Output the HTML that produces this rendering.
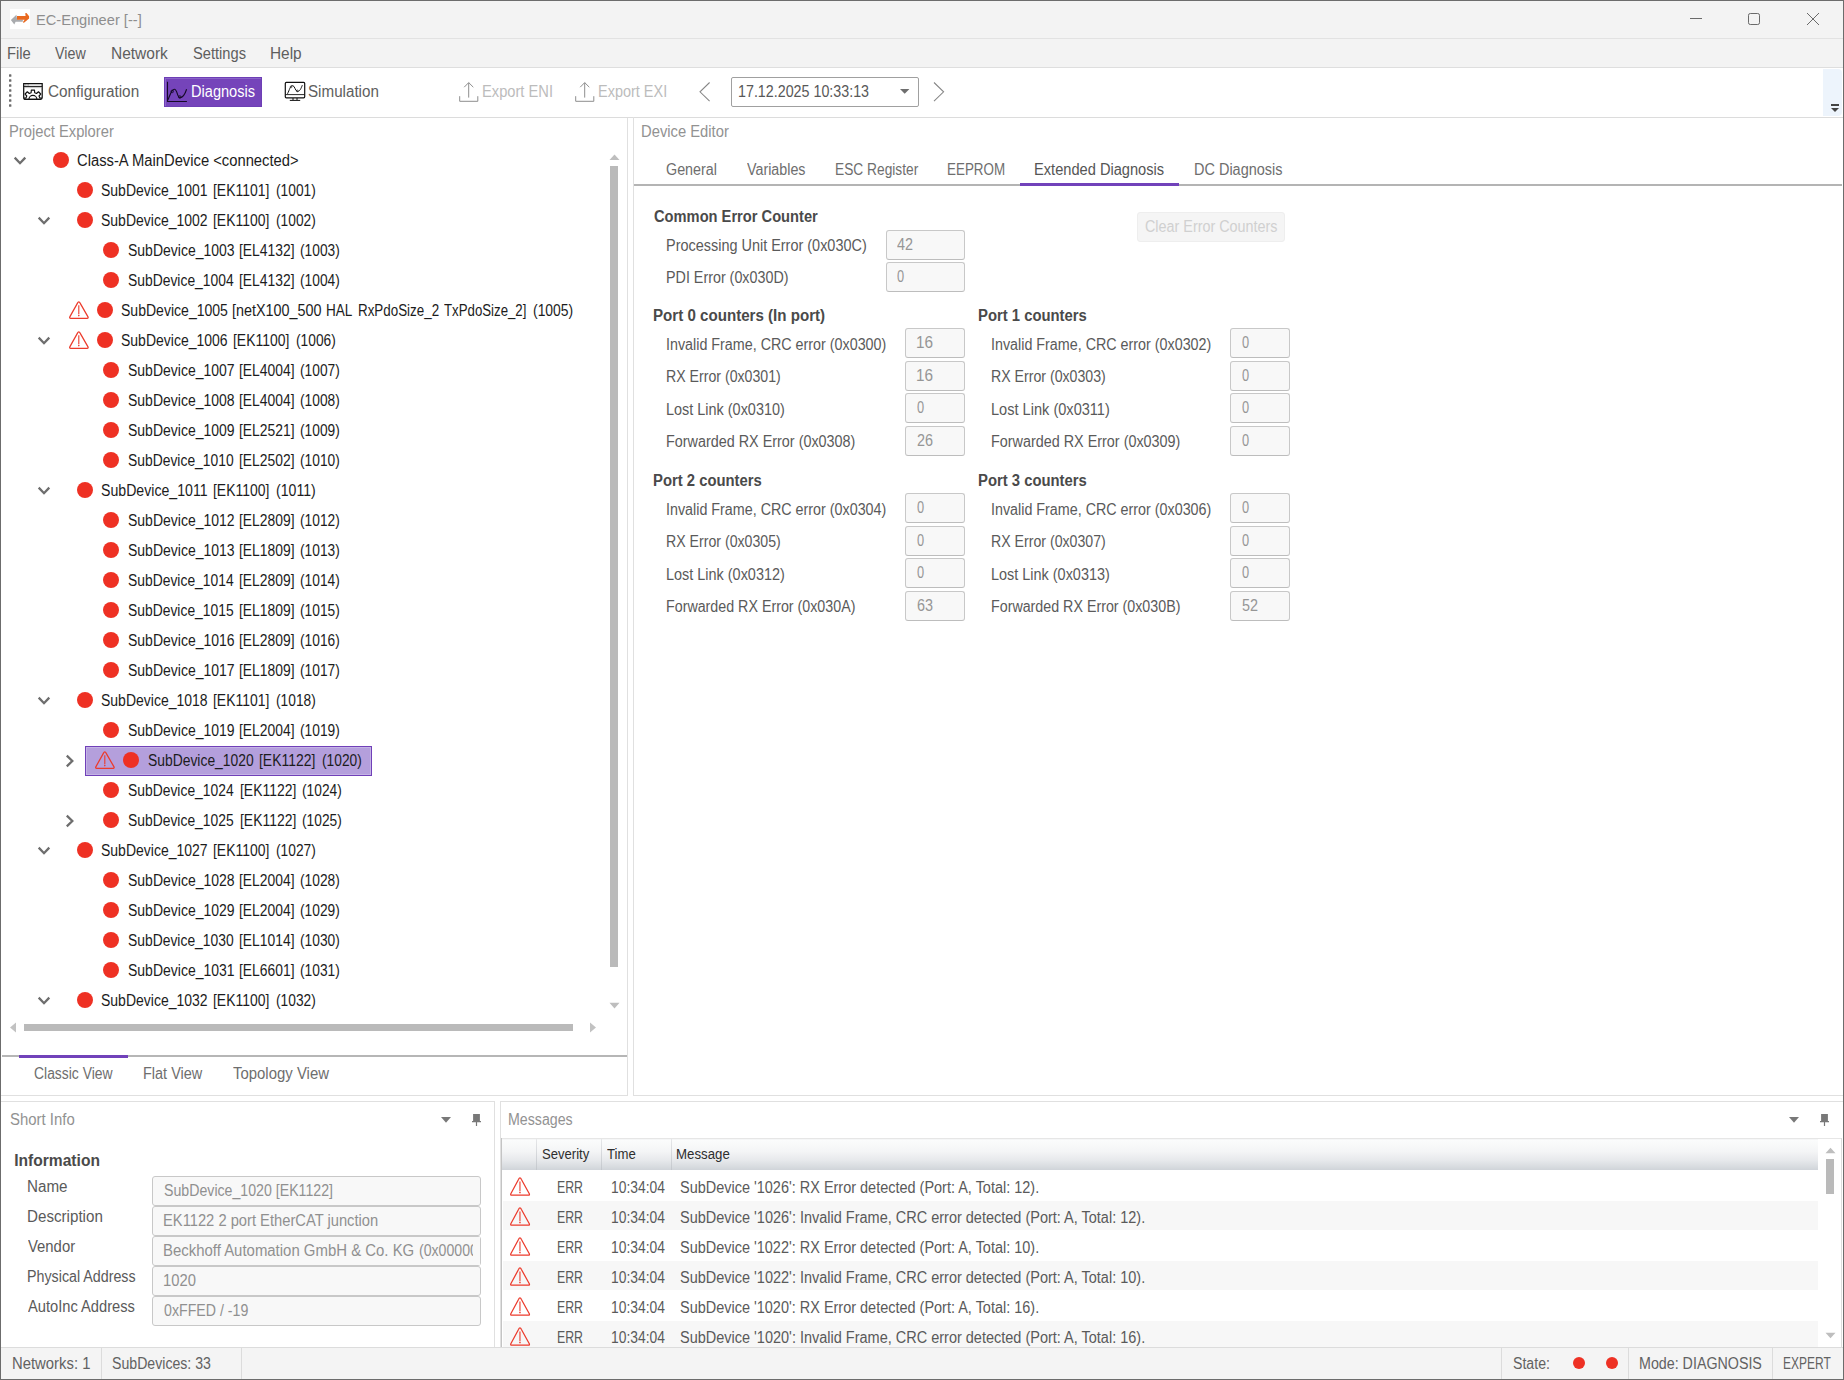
<!DOCTYPE html>
<html><head><meta charset="utf-8"><title>EC-Engineer</title>
<style>
html,body{margin:0;padding:0;}
body{width:1844px;height:1380px;position:relative;overflow:hidden;background:#fff;font-family:"Liberation Sans", sans-serif;}
.a{position:absolute;}
.t{position:absolute;white-space:pre;line-height:21px;transform-origin:0 50%;}
</style></head>
<body>
<div class="a" style="left:0px;top:0px;width:1844px;height:1380px;background:#fff;"></div>
<div class="a" style="left:0px;top:0px;width:1844px;height:39px;background:#f3f3f3;"></div>
<div class="a" style="left:0px;top:38px;width:1844px;height:1px;background:#e2e2e2;"></div>
<div class="a" style="left:0px;top:39px;width:1844px;height:28px;background:#f3f3f3;"></div>
<div class="a" style="left:0px;top:67px;width:1844px;height:1px;background:#dedede;"></div>
<div class="a" style="left:0px;top:117px;width:1844px;height:1px;background:#dcdcdc;"></div>
<div class="a" style="left:10px;top:9px;width:20px;height:20px;background:#fff;"></div>
<svg class="a" style="left:10px;top:9px" width="20" height="20" viewBox="0 0 20 20"><path d="M0.9 10.9 L6.4 5.7 L7.1 10.4 L12.8 10.6 L12.8 12.8 L5.6 12.8 L4.3 15.4 Z" fill="#a9abae"/><path d="M7 6.9 L15.6 6.9 L15.2 4.3 L16.5 3.9 L19.1 7.2 L19.1 9.6 L13.7 14 L13 13.1 L14.6 10.8 L7 10.8 Z" fill="#e9691f"/></svg>
<svg class="a" style="left:1686px;top:8px" width="20" height="20" viewBox="0 0 20 20"><path d="M4 10.5 H16" stroke="#6a6a6a" stroke-width="1" fill="none"/></svg>
<svg class="a" style="left:1744px;top:9px" width="20" height="20" viewBox="0 0 20 20"><rect x="4.5" y="4.5" width="11" height="11" rx="1.8" stroke="#6a6a6a" stroke-width="1" fill="none"/></svg>
<svg class="a" style="left:1803px;top:9px" width="20" height="20" viewBox="0 0 20 20"><path d="M4 4 L16 16 M16 4 L4 16" stroke="#6a6a6a" stroke-width="1" fill="none"/></svg>
<svg class="a" style="left:8px;top:73px" width="5" height="36" viewBox="0 0 5 36"><rect x="1" y="1.2" width="2.4" height="2.5" rx="0.5" fill="#6e6e6e"/><rect x="1" y="6.2" width="2.4" height="2.5" rx="0.5" fill="#6e6e6e"/><rect x="1" y="11.2" width="2.4" height="2.5" rx="0.5" fill="#6e6e6e"/><rect x="1" y="16.2" width="2.4" height="2.5" rx="0.5" fill="#6e6e6e"/><rect x="1" y="21.2" width="2.4" height="2.5" rx="0.5" fill="#6e6e6e"/><rect x="1" y="26.2" width="2.4" height="2.5" rx="0.5" fill="#6e6e6e"/><rect x="1" y="31.2" width="2.4" height="2.5" rx="0.5" fill="#6e6e6e"/></svg>
<svg class="a" style="left:22px;top:82px" width="22" height="19" viewBox="0 0 22 19"><defs><clipPath id="cfgc"><rect x="1.8" y="4.8" width="18.3" height="12.4"/></clipPath></defs><path d="M12.68 10.73 L12.48 8.13 L9.32 8.13 L9.12 10.73 L7.30 11.48 L5.33 9.78 L3.08 12.03 L4.78 14.00 L4.03 15.82 L1.43 16.02 L1.43 17.20 L4.03 17.20 L4.78 17.20 L3.08 17.20 L5.33 17.20 L7.30 17.20 L9.12 17.20 L9.32 17.20 L12.48 17.20 L12.68 17.20 L14.50 17.20 L16.47 17.20 L18.72 17.20 L17.02 17.20 L17.77 17.20 L20.37 17.20 L20.37 16.02 L17.77 15.82 L17.02 14.00 L18.72 12.03 L16.47 9.78 L14.50 11.48 Z" fill="none" stroke="#111" stroke-width="1.15" stroke-linejoin="round" clip-path="url(#cfgc)"/><path d="M6.9 17.4 A4 4 0 0 1 14.9 17.4" fill="none" stroke="#111" stroke-width="1.15" clip-path="url(#cfgc)"/><path d="M1.7 1.5 H20.2 V15.6 Q20.2 17.4 18.4 17.4 H3.5 Q1.7 17.4 1.7 15.6 Z" fill="none" stroke="#111" stroke-width="1.25"/><path d="M1.7 4.4 H20.2" stroke="#111" stroke-width="1"/><path d="M1.9 5.6 H20" stroke="#888" stroke-width="0.5"/><path d="M3.2 2.9 H7.2" stroke="#555" stroke-width="0.8" stroke-dasharray="0.9 0.6"/></svg>
<div class="a" style="left:164px;top:77px;width:98px;height:30px;background:#7544ba;border:1px solid #6d3fb5;box-sizing:border-box;box-shadow:inset 1px 1px 0 0 #8a63c9;"></div>
<svg class="a" style="left:166px;top:81px" width="22" height="22" viewBox="0 0 22 22"><path d="M1.5 0.8 V20.5 H20.9" stroke="#160a28" stroke-width="1.1" fill="none"/><path d="M1.8 19 C4 14.5 5.4 8.3 8.4 8.3 C11.4 8.3 11 16.6 14 16.6 C17 16.6 19.2 12.5 20.6 8.2" stroke="#160a28" stroke-width="1.15" fill="none"/><circle cx="6.2" cy="10.4" r="1.3" fill="none" stroke="#160a28" stroke-width="0.8"/><circle cx="13.8" cy="16" r="1.3" fill="none" stroke="#160a28" stroke-width="0.8"/></svg>
<svg class="a" style="left:284px;top:81px" width="22" height="21" viewBox="0 0 22 21"><rect x="1.3" y="1.4" width="19.4" height="15.4" rx="1" fill="#fff" stroke="#111" stroke-width="1.2"/><path d="M1.5 13.6 H20.5" stroke="#111" stroke-width="0.9"/><path d="M9 17 V19 M13 17 V19 M5.8 19.4 H16.2" stroke="#111" stroke-width="1"/><path d="M3.5 12.8 C5.5 9 6.2 4.6 8.6 4.6 C11 4.6 11 10.4 13.6 10.4 C16 10.4 17.2 7 18.3 4.2" stroke="#111" stroke-width="1" fill="none"/><circle cx="7.2" cy="5.8" r="0.9" fill="none" stroke="#111" stroke-width="0.6"/><circle cx="13.3" cy="9.9" r="0.9" fill="none" stroke="#111" stroke-width="0.6"/></svg>
<svg class="a" style="left:459px;top:81px" width="20" height="22" viewBox="0 0 20 22"><path d="M0.7 15.2 V20.3 H18.8 V15.2" stroke="#8e8e8e" stroke-width="1" fill="none"/><path d="M9.7 16.6 V1.7 M5.2 6.2 L9.7 1.6 L14.3 6.2" stroke="#8e8e8e" stroke-width="1" fill="none"/></svg>
<svg class="a" style="left:575px;top:81px" width="20" height="22" viewBox="0 0 20 22"><path d="M0.7 15.2 V20.3 H18.8 V15.2" stroke="#8e8e8e" stroke-width="1" fill="none"/><path d="M9.7 16.6 V1.7 M5.2 6.2 L9.7 1.6 L14.3 6.2" stroke="#8e8e8e" stroke-width="1" fill="none"/></svg>
<svg class="a" style="left:697px;top:81px" width="16" height="22" viewBox="0 0 16 22"><path d="M12.6 1.5 L3 10.8 L12.6 20.2" stroke="#868686" stroke-width="1.05" fill="none"/></svg>
<div class="a" style="left:731px;top:77px;width:188px;height:30px;background:#fff;border:1px solid #a0a0a0;box-sizing:border-box;border-radius:2px;"></div>
<svg class="a" style="left:899px;top:88px" width="12" height="7" viewBox="0 0 12 7"><path d="M1 1 H10.4 L5.7 5.8 Z" fill="#6e6e6e"/></svg>
<svg class="a" style="left:931px;top:81px" width="16" height="22" viewBox="0 0 16 22"><path d="M3 1.5 L12.6 10.8 L3 20.2" stroke="#868686" stroke-width="1.05" fill="none"/></svg>
<div class="a" style="left:1823px;top:69px;width:19px;height:47px;background:#edf4fc;border-radius:0 4px 4px 0;"></div>
<div class="a" style="left:1831px;top:104px;width:8px;height:2px;background:#444;"></div>
<svg class="a" style="left:1830px;top:107px" width="10" height="6" viewBox="0 0 10 6"><path d="M1 1 H9 L5 5 Z" fill="#444"/></svg>
<div class="a" style="left:627px;top:118px;width:1px;height:978px;background:#e0e0e0;"></div>
<div class="a" style="left:0px;top:1095px;width:628px;height:1px;background:#e0e0e0;"></div>
<div class="a" style="left:633px;top:117px;width:1px;height:979px;background:#e0e0e0;"></div>
<div class="a" style="left:633px;top:1095px;width:1211px;height:1px;background:#e0e0e0;"></div>
<div class="a" style="left:0px;top:1101px;width:495px;height:1px;background:#e0e0e0;"></div>
<div class="a" style="left:494px;top:1101px;width:1px;height:247px;background:#e0e0e0;"></div>
<div class="a" style="left:500px;top:1101px;width:1344px;height:1px;background:#e0e0e0;"></div>
<div class="a" style="left:500px;top:1101px;width:1px;height:247px;background:#e0e0e0;"></div>
<svg class="a" style="left:12px;top:154px" width="16" height="12" viewBox="-8 -6 16 12"><path d="M-5.3 -2.4 L0 3.2 L5.3 -2.4" stroke="#6e6e6e" stroke-width="2.3" fill="none"/></svg>
<div class="a" style="left:52.8px;top:151.5px;width:16.4px;height:16.4px;border-radius:50%;background:#ee3124"></div>
<div class="a" style="left:76.8px;top:181.5px;width:16.4px;height:16.4px;border-radius:50%;background:#ee3124"></div>
<svg class="a" style="left:35.8px;top:214px" width="16" height="12" viewBox="-8 -6 16 12"><path d="M-5.3 -2.4 L0 3.2 L5.3 -2.4" stroke="#6e6e6e" stroke-width="2.3" fill="none"/></svg>
<div class="a" style="left:76.8px;top:211.5px;width:16.4px;height:16.4px;border-radius:50%;background:#ee3124"></div>
<div class="a" style="left:102.8px;top:241.5px;width:16.4px;height:16.4px;border-radius:50%;background:#ee3124"></div>
<div class="a" style="left:102.8px;top:271.5px;width:16.4px;height:16.4px;border-radius:50%;background:#ee3124"></div>
<svg class="a" style="left:67.9px;top:299.9px" width="22.0" height="20.0" viewBox="-1 -1 22 20" preserveAspectRatio="none"><path d="M8.5 2.1 Q9 0.75 9.8 0.75 Q10.6 0.75 11.1 2.1 L19 15.9 Q19.6 17.3 18.1 17.3 L1.7 17.3 Q0.2 17.3 0.8 15.9 Z" fill="none" stroke="#ec3b2c" stroke-width="1.25" stroke-linejoin="round"/><path d="M9.8 4.3 V13.2" stroke="#ec3b2c" stroke-width="1.1"/><circle cx="9.8" cy="14.6" r="0.8" fill="#ec3b2c"/></svg>
<div class="a" style="left:96.6px;top:301.5px;width:16.4px;height:16.4px;border-radius:50%;background:#ee3124"></div>
<svg class="a" style="left:35.8px;top:334px" width="16" height="12" viewBox="-8 -6 16 12"><path d="M-5.3 -2.4 L0 3.2 L5.3 -2.4" stroke="#6e6e6e" stroke-width="2.3" fill="none"/></svg>
<svg class="a" style="left:67.9px;top:329.9px" width="22.0" height="20.0" viewBox="-1 -1 22 20" preserveAspectRatio="none"><path d="M8.5 2.1 Q9 0.75 9.8 0.75 Q10.6 0.75 11.1 2.1 L19 15.9 Q19.6 17.3 18.1 17.3 L1.7 17.3 Q0.2 17.3 0.8 15.9 Z" fill="none" stroke="#ec3b2c" stroke-width="1.25" stroke-linejoin="round"/><path d="M9.8 4.3 V13.2" stroke="#ec3b2c" stroke-width="1.1"/><circle cx="9.8" cy="14.6" r="0.8" fill="#ec3b2c"/></svg>
<div class="a" style="left:96.6px;top:331.5px;width:16.4px;height:16.4px;border-radius:50%;background:#ee3124"></div>
<div class="a" style="left:102.8px;top:361.5px;width:16.4px;height:16.4px;border-radius:50%;background:#ee3124"></div>
<div class="a" style="left:102.8px;top:391.5px;width:16.4px;height:16.4px;border-radius:50%;background:#ee3124"></div>
<div class="a" style="left:102.8px;top:421.5px;width:16.4px;height:16.4px;border-radius:50%;background:#ee3124"></div>
<div class="a" style="left:102.8px;top:451.5px;width:16.4px;height:16.4px;border-radius:50%;background:#ee3124"></div>
<svg class="a" style="left:35.8px;top:484px" width="16" height="12" viewBox="-8 -6 16 12"><path d="M-5.3 -2.4 L0 3.2 L5.3 -2.4" stroke="#6e6e6e" stroke-width="2.3" fill="none"/></svg>
<div class="a" style="left:76.8px;top:481.5px;width:16.4px;height:16.4px;border-radius:50%;background:#ee3124"></div>
<div class="a" style="left:102.8px;top:511.50000000000006px;width:16.4px;height:16.4px;border-radius:50%;background:#ee3124"></div>
<div class="a" style="left:102.8px;top:541.5px;width:16.4px;height:16.4px;border-radius:50%;background:#ee3124"></div>
<div class="a" style="left:102.8px;top:571.5px;width:16.4px;height:16.4px;border-radius:50%;background:#ee3124"></div>
<div class="a" style="left:102.8px;top:601.5px;width:16.4px;height:16.4px;border-radius:50%;background:#ee3124"></div>
<div class="a" style="left:102.8px;top:631.5px;width:16.4px;height:16.4px;border-radius:50%;background:#ee3124"></div>
<div class="a" style="left:102.8px;top:661.5px;width:16.4px;height:16.4px;border-radius:50%;background:#ee3124"></div>
<svg class="a" style="left:35.8px;top:694px" width="16" height="12" viewBox="-8 -6 16 12"><path d="M-5.3 -2.4 L0 3.2 L5.3 -2.4" stroke="#6e6e6e" stroke-width="2.3" fill="none"/></svg>
<div class="a" style="left:76.8px;top:691.5px;width:16.4px;height:16.4px;border-radius:50%;background:#ee3124"></div>
<div class="a" style="left:102.8px;top:721.5px;width:16.4px;height:16.4px;border-radius:50%;background:#ee3124"></div>
<div class="a" style="left:85px;top:746px;width:287px;height:30px;background:#b49fdc;border:1px solid #7040b8;box-sizing:border-box;box-shadow:inset 0 0 0 1px #c4b3e5;"></div>
<svg class="a" style="left:64px;top:753px" width="12" height="16" viewBox="-6 -8 12 16"><path d="M-3.2 -5.3 L2.3 0 L-3.2 5.3" stroke="#6e6e6e" stroke-width="2.3" fill="none"/></svg>
<svg class="a" style="left:93.9px;top:749.9px" width="22.0" height="20.0" viewBox="-1 -1 22 20" preserveAspectRatio="none"><path d="M8.5 2.1 Q9 0.75 9.8 0.75 Q10.6 0.75 11.1 2.1 L19 15.9 Q19.6 17.3 18.1 17.3 L1.7 17.3 Q0.2 17.3 0.8 15.9 Z" fill="none" stroke="#ec3b2c" stroke-width="1.25" stroke-linejoin="round"/><path d="M9.8 4.3 V13.2" stroke="#ec3b2c" stroke-width="1.1"/><circle cx="9.8" cy="14.6" r="0.8" fill="#ec3b2c"/></svg>
<div class="a" style="left:122.8px;top:751.5px;width:16.4px;height:16.4px;border-radius:50%;background:#ee3124"></div>
<div class="a" style="left:102.8px;top:781.5px;width:16.4px;height:16.4px;border-radius:50%;background:#ee3124"></div>
<svg class="a" style="left:64px;top:813px" width="12" height="16" viewBox="-6 -8 12 16"><path d="M-3.2 -5.3 L2.3 0 L-3.2 5.3" stroke="#6e6e6e" stroke-width="2.3" fill="none"/></svg>
<div class="a" style="left:102.8px;top:811.5px;width:16.4px;height:16.4px;border-radius:50%;background:#ee3124"></div>
<svg class="a" style="left:35.8px;top:844px" width="16" height="12" viewBox="-8 -6 16 12"><path d="M-5.3 -2.4 L0 3.2 L5.3 -2.4" stroke="#6e6e6e" stroke-width="2.3" fill="none"/></svg>
<div class="a" style="left:76.8px;top:841.5px;width:16.4px;height:16.4px;border-radius:50%;background:#ee3124"></div>
<div class="a" style="left:102.8px;top:871.5px;width:16.4px;height:16.4px;border-radius:50%;background:#ee3124"></div>
<div class="a" style="left:102.8px;top:901.5px;width:16.4px;height:16.4px;border-radius:50%;background:#ee3124"></div>
<div class="a" style="left:102.8px;top:931.5px;width:16.4px;height:16.4px;border-radius:50%;background:#ee3124"></div>
<div class="a" style="left:102.8px;top:961.5px;width:16.4px;height:16.4px;border-radius:50%;background:#ee3124"></div>
<svg class="a" style="left:35.8px;top:994px" width="16" height="12" viewBox="-8 -6 16 12"><path d="M-5.3 -2.4 L0 3.2 L5.3 -2.4" stroke="#6e6e6e" stroke-width="2.3" fill="none"/></svg>
<div class="a" style="left:76.8px;top:991.5px;width:16.4px;height:16.4px;border-radius:50%;background:#ee3124"></div>
<svg class="a" style="left:608.5px;top:153.8px" width="11" height="7" viewBox="0 0 11 7"><path d="M0.5 6.1 L5.5 0.5 L10.5 6.1 Z" fill="#bebebe"/></svg>
<div class="a" style="left:610px;top:166px;width:8px;height:801px;background:#bababa;"></div>
<svg class="a" style="left:608.5px;top:1002.2px" width="11" height="7" viewBox="0 0 11 7"><path d="M0.5 0.8 L5.5 6.4 L10.5 0.8 Z" fill="#bebebe"/></svg>
<svg class="a" style="left:9px;top:1022px" width="8" height="11" viewBox="0 0 8 11"><path d="M7 0.5 L1 5.5 L7 10.5 Z" fill="#c2c2c2"/></svg>
<div class="a" style="left:24px;top:1024px;width:549px;height:7px;background:#bababa;"></div>
<svg class="a" style="left:589px;top:1022px" width="8" height="11" viewBox="0 0 8 11"><path d="M1 0.5 L7 5.5 L1 10.5 Z" fill="#c2c2c2"/></svg>
<div class="a" style="left:2px;top:1055px;width:625px;height:2px;background:#b6b6b6;"></div>
<div class="a" style="left:19px;top:1055px;width:109px;height:3px;background:#7142ba;"></div>
<div class="a" style="left:634px;top:184px;width:1208px;height:2px;background:#b4b4b4;"></div>
<div class="a" style="left:1020px;top:183px;width:159px;height:3px;background:#7142ba;"></div>
<div class="a" style="left:1137px;top:212px;width:148px;height:30px;background:#f5f5f5;border:1px solid #eeeeee;box-sizing:border-box;border-radius:3px;"></div>
<div class="a" style="left:886px;top:230px;width:79px;height:30px;background:#f8f8f8;border:1px solid #c8c8c8;box-sizing:border-box;border-radius:3px;border-bottom-color:#bdbdbd;"></div>
<div class="a" style="left:886px;top:262px;width:79px;height:30px;background:#f8f8f8;border:1px solid #c8c8c8;box-sizing:border-box;border-radius:3px;border-bottom-color:#bdbdbd;"></div>
<div class="a" style="left:905.0px;top:328px;width:60px;height:30px;background:#f8f8f8;border:1px solid #c8c8c8;box-sizing:border-box;border-radius:3px;border-bottom-color:#bdbdbd;"></div>
<div class="a" style="left:905.0px;top:361px;width:60px;height:30px;background:#f8f8f8;border:1px solid #c8c8c8;box-sizing:border-box;border-radius:3px;border-bottom-color:#bdbdbd;"></div>
<div class="a" style="left:905.0px;top:393px;width:60px;height:30px;background:#f8f8f8;border:1px solid #c8c8c8;box-sizing:border-box;border-radius:3px;border-bottom-color:#bdbdbd;"></div>
<div class="a" style="left:905.0px;top:426px;width:60px;height:30px;background:#f8f8f8;border:1px solid #c8c8c8;box-sizing:border-box;border-radius:3px;border-bottom-color:#bdbdbd;"></div>
<div class="a" style="left:1229.9px;top:328px;width:60px;height:30px;background:#f8f8f8;border:1px solid #c8c8c8;box-sizing:border-box;border-radius:3px;border-bottom-color:#bdbdbd;"></div>
<div class="a" style="left:1229.9px;top:361px;width:60px;height:30px;background:#f8f8f8;border:1px solid #c8c8c8;box-sizing:border-box;border-radius:3px;border-bottom-color:#bdbdbd;"></div>
<div class="a" style="left:1229.9px;top:393px;width:60px;height:30px;background:#f8f8f8;border:1px solid #c8c8c8;box-sizing:border-box;border-radius:3px;border-bottom-color:#bdbdbd;"></div>
<div class="a" style="left:1229.9px;top:426px;width:60px;height:30px;background:#f8f8f8;border:1px solid #c8c8c8;box-sizing:border-box;border-radius:3px;border-bottom-color:#bdbdbd;"></div>
<div class="a" style="left:905.0px;top:493px;width:60px;height:30px;background:#f8f8f8;border:1px solid #c8c8c8;box-sizing:border-box;border-radius:3px;border-bottom-color:#bdbdbd;"></div>
<div class="a" style="left:905.0px;top:526px;width:60px;height:30px;background:#f8f8f8;border:1px solid #c8c8c8;box-sizing:border-box;border-radius:3px;border-bottom-color:#bdbdbd;"></div>
<div class="a" style="left:905.0px;top:558px;width:60px;height:30px;background:#f8f8f8;border:1px solid #c8c8c8;box-sizing:border-box;border-radius:3px;border-bottom-color:#bdbdbd;"></div>
<div class="a" style="left:905.0px;top:591px;width:60px;height:30px;background:#f8f8f8;border:1px solid #c8c8c8;box-sizing:border-box;border-radius:3px;border-bottom-color:#bdbdbd;"></div>
<div class="a" style="left:1229.9px;top:493px;width:60px;height:30px;background:#f8f8f8;border:1px solid #c8c8c8;box-sizing:border-box;border-radius:3px;border-bottom-color:#bdbdbd;"></div>
<div class="a" style="left:1229.9px;top:526px;width:60px;height:30px;background:#f8f8f8;border:1px solid #c8c8c8;box-sizing:border-box;border-radius:3px;border-bottom-color:#bdbdbd;"></div>
<div class="a" style="left:1229.9px;top:558px;width:60px;height:30px;background:#f8f8f8;border:1px solid #c8c8c8;box-sizing:border-box;border-radius:3px;border-bottom-color:#bdbdbd;"></div>
<div class="a" style="left:1229.9px;top:591px;width:60px;height:30px;background:#f8f8f8;border:1px solid #c8c8c8;box-sizing:border-box;border-radius:3px;border-bottom-color:#bdbdbd;"></div>
<svg class="a" style="left:440px;top:1116px" width="12" height="8" viewBox="0 0 12 8"><path d="M1 1 H11 L6 6.8 Z" fill="#787878"/></svg>
<svg class="a" style="left:471px;top:1114px" width="11" height="13" viewBox="0 0 11 13"><path d="M2.1 0.1 H8.9 V7 H10 V8.2 H6.1 V12 H4.9 V8.2 H1 V7 H2.1 Z" fill="#787878"/></svg>
<div class="a" style="left:152px;top:1176px;width:329px;height:30px;background:#f8f8f8;border:1px solid #c8c8c8;box-sizing:border-box;border-radius:3px;"></div>
<div class="a" style="left:152px;top:1206px;width:329px;height:30px;background:#f8f8f8;border:1px solid #c8c8c8;box-sizing:border-box;border-radius:3px;"></div>
<div class="a" style="left:152px;top:1236px;width:329px;height:30px;background:#f8f8f8;border:1px solid #c8c8c8;box-sizing:border-box;border-radius:3px;"></div>
<div class="a" style="left:152px;top:1266px;width:329px;height:30px;background:#f8f8f8;border:1px solid #c8c8c8;box-sizing:border-box;border-radius:3px;"></div>
<div class="a" style="left:152px;top:1296px;width:329px;height:30px;background:#f8f8f8;border:1px solid #c8c8c8;box-sizing:border-box;border-radius:3px;"></div>
<svg class="a" style="left:1788px;top:1116px" width="12" height="8" viewBox="0 0 12 8"><path d="M1 1 H11 L6 6.8 Z" fill="#787878"/></svg>
<svg class="a" style="left:1819px;top:1114px" width="11" height="13" viewBox="0 0 11 13"><path d="M2.1 0.1 H8.9 V7 H10 V8.2 H6.1 V12 H4.9 V8.2 H1 V7 H2.1 Z" fill="#787878"/></svg>
<div class="a" style="left:501px;top:1138px;width:1px;height:209px;background:#c4c4c4;"></div>
<div class="a" style="left:502px;top:1138px;width:1340px;height:1px;background:#e6e6e6;"></div>
<div class="a" style="left:1841px;top:1138px;width:1px;height:209px;background:#dddddd;"></div>
<div class="a" style="left:502px;top:1139px;width:1316px;height:31px;background:linear-gradient(#f1f2f3 0,#fbfcfc 4%,#f4f5f6 40%,#e6e8eb 70%,#d6dade 92%,#d0d4d9 100%);"></div>
<div class="a" style="left:536px;top:1139px;width:1px;height:31px;background:linear-gradient(#e6e7e9,#c3c7cc);"></div>
<div class="a" style="left:601px;top:1139px;width:1px;height:31px;background:linear-gradient(#e6e7e9,#c3c7cc);"></div>
<div class="a" style="left:671px;top:1139px;width:1px;height:31px;background:linear-gradient(#e6e7e9,#c3c7cc);"></div>
<svg class="a" style="left:508.9px;top:1176.2px" width="22.330000000000002" height="21.0" viewBox="-1 -1 22 20" preserveAspectRatio="none"><path d="M8.5 2.1 Q9 0.75 9.8 0.75 Q10.6 0.75 11.1 2.1 L19 15.9 Q19.6 17.3 18.1 17.3 L1.7 17.3 Q0.2 17.3 0.8 15.9 Z" fill="none" stroke="#ec3b2c" stroke-width="1.25" stroke-linejoin="round"/><path d="M9.8 4.3 V13.2" stroke="#ec3b2c" stroke-width="1.1"/><circle cx="9.8" cy="14.6" r="0.8" fill="#ec3b2c"/></svg>
<div class="a" style="left:503px;top:1201px;width:1315px;height:29px;background:#f7f7f7;"></div>
<svg class="a" style="left:508.9px;top:1206.2px" width="22.330000000000002" height="21.0" viewBox="-1 -1 22 20" preserveAspectRatio="none"><path d="M8.5 2.1 Q9 0.75 9.8 0.75 Q10.6 0.75 11.1 2.1 L19 15.9 Q19.6 17.3 18.1 17.3 L1.7 17.3 Q0.2 17.3 0.8 15.9 Z" fill="none" stroke="#ec3b2c" stroke-width="1.25" stroke-linejoin="round"/><path d="M9.8 4.3 V13.2" stroke="#ec3b2c" stroke-width="1.1"/><circle cx="9.8" cy="14.6" r="0.8" fill="#ec3b2c"/></svg>
<svg class="a" style="left:508.9px;top:1236.2px" width="22.330000000000002" height="21.0" viewBox="-1 -1 22 20" preserveAspectRatio="none"><path d="M8.5 2.1 Q9 0.75 9.8 0.75 Q10.6 0.75 11.1 2.1 L19 15.9 Q19.6 17.3 18.1 17.3 L1.7 17.3 Q0.2 17.3 0.8 15.9 Z" fill="none" stroke="#ec3b2c" stroke-width="1.25" stroke-linejoin="round"/><path d="M9.8 4.3 V13.2" stroke="#ec3b2c" stroke-width="1.1"/><circle cx="9.8" cy="14.6" r="0.8" fill="#ec3b2c"/></svg>
<div class="a" style="left:503px;top:1261px;width:1315px;height:29px;background:#f7f7f7;"></div>
<svg class="a" style="left:508.9px;top:1266.2px" width="22.330000000000002" height="21.0" viewBox="-1 -1 22 20" preserveAspectRatio="none"><path d="M8.5 2.1 Q9 0.75 9.8 0.75 Q10.6 0.75 11.1 2.1 L19 15.9 Q19.6 17.3 18.1 17.3 L1.7 17.3 Q0.2 17.3 0.8 15.9 Z" fill="none" stroke="#ec3b2c" stroke-width="1.25" stroke-linejoin="round"/><path d="M9.8 4.3 V13.2" stroke="#ec3b2c" stroke-width="1.1"/><circle cx="9.8" cy="14.6" r="0.8" fill="#ec3b2c"/></svg>
<svg class="a" style="left:508.9px;top:1296.2px" width="22.330000000000002" height="21.0" viewBox="-1 -1 22 20" preserveAspectRatio="none"><path d="M8.5 2.1 Q9 0.75 9.8 0.75 Q10.6 0.75 11.1 2.1 L19 15.9 Q19.6 17.3 18.1 17.3 L1.7 17.3 Q0.2 17.3 0.8 15.9 Z" fill="none" stroke="#ec3b2c" stroke-width="1.25" stroke-linejoin="round"/><path d="M9.8 4.3 V13.2" stroke="#ec3b2c" stroke-width="1.1"/><circle cx="9.8" cy="14.6" r="0.8" fill="#ec3b2c"/></svg>
<div class="a" style="left:503px;top:1321px;width:1315px;height:26px;background:#f7f7f7;"></div>
<svg class="a" style="left:508.9px;top:1326.2px" width="22.330000000000002" height="21.0" viewBox="-1 -1 22 20" preserveAspectRatio="none"><path d="M8.5 2.1 Q9 0.75 9.8 0.75 Q10.6 0.75 11.1 2.1 L19 15.9 Q19.6 17.3 18.1 17.3 L1.7 17.3 Q0.2 17.3 0.8 15.9 Z" fill="none" stroke="#ec3b2c" stroke-width="1.25" stroke-linejoin="round"/><path d="M9.8 4.3 V13.2" stroke="#ec3b2c" stroke-width="1.1"/><circle cx="9.8" cy="14.6" r="0.8" fill="#ec3b2c"/></svg>
<svg class="a" style="left:1824.5px;top:1146.6px" width="11" height="7" viewBox="0 0 11 7"><path d="M0.5 6.3 L5.5 0.7 L10.5 6.3 Z" fill="#bebebe"/></svg>
<div class="a" style="left:1826px;top:1159px;width:8px;height:35px;background:#bababa;"></div>
<svg class="a" style="left:1824.5px;top:1332.3px" width="11" height="7" viewBox="0 0 11 7"><path d="M0.5 0.7 L5.5 6.3 L10.5 0.7 Z" fill="#bebebe"/></svg>
<div class="a" style="left:0px;top:1347px;width:1844px;height:33px;background:#f4f4f4;"></div>
<div class="a" style="left:0px;top:1347px;width:1844px;height:1px;background:#dcdcdc;"></div>
<div class="a" style="left:101px;top:1348px;width:1px;height:31px;background:#dcdcdc;"></div>
<div class="a" style="left:241px;top:1348px;width:1px;height:31px;background:#dcdcdc;"></div>
<div class="a" style="left:1501px;top:1348px;width:1px;height:31px;background:#dcdcdc;"></div>
<div class="a" style="left:1628px;top:1348px;width:1px;height:31px;background:#dcdcdc;"></div>
<div class="a" style="left:1772px;top:1348px;width:1px;height:31px;background:#dcdcdc;"></div>
<div class="a" style="left:1573px;top:1357px;width:12px;height:12px;border-radius:50%;background:#ee3124"></div>
<div class="a" style="left:1605.5px;top:1357px;width:12px;height:12px;border-radius:50%;background:#ee3124"></div>
<div class="a" style="left:0px;top:0px;width:1844px;height:1px;background:#6c6c6c;"></div>
<div class="a" style="left:0px;top:0px;width:1px;height:1380px;background:#6c6c6c;"></div>
<div class="a" style="left:1843px;top:0px;width:1px;height:1380px;background:#6c6c6c;"></div>
<div class="a" style="left:0px;top:1379px;width:1844px;height:1px;background:#6c6c6c;"></div>
<span class="t" style="left:35.91px;top:10.00px;font-size:14.8px;color:#8e8e8e;transform:scaleX(0.9887);">EC-Engineer [--]</span>
<span class="t" style="left:6.65px;top:43.00px;font-size:15.6px;color:#5e5e5e;transform:scaleX(0.9465);">File</span>
<span class="t" style="left:54.80px;top:43.00px;font-size:15.6px;color:#5e5e5e;transform:scaleX(0.9166);">View</span>
<span class="t" style="left:110.61px;top:43.00px;font-size:15.6px;color:#5e5e5e;transform:scaleX(0.9930);">Network</span>
<span class="t" style="left:192.80px;top:43.00px;font-size:15.6px;color:#5e5e5e;transform:scaleX(0.9408);">Settings</span>
<span class="t" style="left:269.91px;top:43.00px;font-size:15.6px;color:#5e5e5e;transform:scaleX(0.9873);">Help</span>
<span class="t" style="left:47.50px;top:81.00px;font-size:15.6px;color:#5e5e5e;transform:scaleX(0.9828);">Configuration</span>
<span class="t" style="left:190.76px;top:81.00px;font-size:15.6px;color:#fff;transform:scaleX(0.9353);">Diagnosis</span>
<span class="t" style="left:308.30px;top:81.00px;font-size:15.6px;color:#5e5e5e;transform:scaleX(0.9732);">Simulation</span>
<span class="t" style="left:481.66px;top:81.00px;font-size:15.6px;color:#bcbcbc;transform:scaleX(0.9417);">Export ENI</span>
<span class="t" style="left:597.67px;top:81.00px;font-size:15.6px;color:#bcbcbc;transform:scaleX(0.9279);">Export EXI</span>
<span class="t" style="left:738.28px;top:81.00px;font-size:15.6px;color:#585858;transform:scaleX(0.9158);">17.12.2025 10:33:13</span>
<span class="t" style="left:9.06px;top:121.00px;font-size:15.6px;color:#929292;transform:scaleX(0.9450);">Project Explorer</span>
<span class="t" style="left:641.05px;top:121.00px;font-size:15.6px;color:#929292;transform:scaleX(0.9471);">Device Editor</span>
<span class="t" style="left:77.40px;top:150.00px;font-size:15.6px;color:#1c1c1c;transform:scaleX(0.9468);">Class-A MainDevice &lt;connected&gt;</span>
<span class="t" style="left:101.30px;top:180.00px;font-size:15.6px;color:#1c1c1c;transform:scaleX(0.8975);">SubDevice_1001</span>
<span class="t" style="left:213.11px;top:180.00px;font-size:15.6px;color:#1c1c1c;transform:scaleX(0.8935);">[EK1101]</span>
<span class="t" style="left:275.80px;top:180.00px;font-size:15.6px;color:#1c1c1c;transform:scaleX(0.8823);">(1001)</span>
<span class="t" style="left:101.30px;top:210.00px;font-size:15.6px;color:#1c1c1c;transform:scaleX(0.8975);">SubDevice_1002</span>
<span class="t" style="left:213.11px;top:210.00px;font-size:15.6px;color:#1c1c1c;transform:scaleX(0.8935);">[EK1100]</span>
<span class="t" style="left:275.80px;top:210.00px;font-size:15.6px;color:#1c1c1c;transform:scaleX(0.8823);">(1002)</span>
<span class="t" style="left:127.70px;top:240.00px;font-size:15.6px;color:#1c1c1c;transform:scaleX(0.8975);">SubDevice_1003</span>
<span class="t" style="left:239.31px;top:240.00px;font-size:15.6px;color:#1c1c1c;transform:scaleX(0.8888);">[EL4132]</span>
<span class="t" style="left:300.30px;top:240.00px;font-size:15.6px;color:#1c1c1c;transform:scaleX(0.8823);">(1003)</span>
<span class="t" style="left:127.70px;top:270.00px;font-size:15.6px;color:#1c1c1c;transform:scaleX(0.8900);">SubDevice_1004</span>
<span class="t" style="left:239.31px;top:270.00px;font-size:15.6px;color:#1c1c1c;transform:scaleX(0.8888);">[EL4132]</span>
<span class="t" style="left:300.30px;top:270.00px;font-size:15.6px;color:#1c1c1c;transform:scaleX(0.8823);">(1004)</span>
<span class="t" style="left:121.30px;top:300.00px;font-size:15.6px;color:#1c1c1c;transform:scaleX(0.9001);">SubDevice_1005</span>
<span class="t" style="left:232.38px;top:300.00px;font-size:15.6px;color:#1c1c1c;transform:scaleX(0.9218);">[netX100_500</span>
<span class="t" style="left:326.13px;top:300.00px;font-size:15.6px;color:#1c1c1c;transform:scaleX(0.8698);">HAL</span>
<span class="t" style="left:358.14px;top:300.00px;font-size:15.6px;color:#1c1c1c;transform:scaleX(0.8587);">RxPdoSize_2</span>
<span class="t" style="left:444.40px;top:300.00px;font-size:15.6px;color:#1c1c1c;transform:scaleX(0.8486);">TxPdoSize_2]</span>
<span class="t" style="left:532.90px;top:300.00px;font-size:15.6px;color:#1c1c1c;transform:scaleX(0.8912);">(1005)</span>
<span class="t" style="left:121.30px;top:330.00px;font-size:15.6px;color:#1c1c1c;transform:scaleX(0.8975);">SubDevice_1006</span>
<span class="t" style="left:233.11px;top:330.00px;font-size:15.6px;color:#1c1c1c;transform:scaleX(0.8935);">[EK1100]</span>
<span class="t" style="left:295.80px;top:330.00px;font-size:15.6px;color:#1c1c1c;transform:scaleX(0.8823);">(1006)</span>
<span class="t" style="left:127.70px;top:360.00px;font-size:15.6px;color:#1c1c1c;transform:scaleX(0.8975);">SubDevice_1007</span>
<span class="t" style="left:239.31px;top:360.00px;font-size:15.6px;color:#1c1c1c;transform:scaleX(0.8888);">[EL4004]</span>
<span class="t" style="left:300.30px;top:360.00px;font-size:15.6px;color:#1c1c1c;transform:scaleX(0.8823);">(1007)</span>
<span class="t" style="left:127.70px;top:390.00px;font-size:15.6px;color:#1c1c1c;transform:scaleX(0.8975);">SubDevice_1008</span>
<span class="t" style="left:239.31px;top:390.00px;font-size:15.6px;color:#1c1c1c;transform:scaleX(0.8888);">[EL4004]</span>
<span class="t" style="left:300.30px;top:390.00px;font-size:15.6px;color:#1c1c1c;transform:scaleX(0.8823);">(1008)</span>
<span class="t" style="left:127.70px;top:420.00px;font-size:15.6px;color:#1c1c1c;transform:scaleX(0.8975);">SubDevice_1009</span>
<span class="t" style="left:239.31px;top:420.00px;font-size:15.6px;color:#1c1c1c;transform:scaleX(0.8888);">[EL2521]</span>
<span class="t" style="left:300.30px;top:420.00px;font-size:15.6px;color:#1c1c1c;transform:scaleX(0.8823);">(1009)</span>
<span class="t" style="left:127.70px;top:450.00px;font-size:15.6px;color:#1c1c1c;transform:scaleX(0.8900);">SubDevice_1010</span>
<span class="t" style="left:239.31px;top:450.00px;font-size:15.6px;color:#1c1c1c;transform:scaleX(0.8888);">[EL2502]</span>
<span class="t" style="left:300.30px;top:450.00px;font-size:15.6px;color:#1c1c1c;transform:scaleX(0.8823);">(1010)</span>
<span class="t" style="left:101.30px;top:480.00px;font-size:15.6px;color:#1c1c1c;transform:scaleX(0.9064);">SubDevice_1011</span>
<span class="t" style="left:213.11px;top:480.00px;font-size:15.6px;color:#1c1c1c;transform:scaleX(0.8935);">[EK1100]</span>
<span class="t" style="left:275.80px;top:480.00px;font-size:15.6px;color:#1c1c1c;transform:scaleX(0.9057);">(1011)</span>
<span class="t" style="left:127.70px;top:510.00px;font-size:15.6px;color:#1c1c1c;transform:scaleX(0.8975);">SubDevice_1012</span>
<span class="t" style="left:239.31px;top:510.00px;font-size:15.6px;color:#1c1c1c;transform:scaleX(0.8888);">[EL2809]</span>
<span class="t" style="left:300.30px;top:510.00px;font-size:15.6px;color:#1c1c1c;transform:scaleX(0.8823);">(1012)</span>
<span class="t" style="left:127.70px;top:540.00px;font-size:15.6px;color:#1c1c1c;transform:scaleX(0.8975);">SubDevice_1013</span>
<span class="t" style="left:239.31px;top:540.00px;font-size:15.6px;color:#1c1c1c;transform:scaleX(0.8888);">[EL1809]</span>
<span class="t" style="left:300.30px;top:540.00px;font-size:15.6px;color:#1c1c1c;transform:scaleX(0.8823);">(1013)</span>
<span class="t" style="left:127.70px;top:570.00px;font-size:15.6px;color:#1c1c1c;transform:scaleX(0.8900);">SubDevice_1014</span>
<span class="t" style="left:239.31px;top:570.00px;font-size:15.6px;color:#1c1c1c;transform:scaleX(0.8888);">[EL2809]</span>
<span class="t" style="left:300.30px;top:570.00px;font-size:15.6px;color:#1c1c1c;transform:scaleX(0.8823);">(1014)</span>
<span class="t" style="left:127.70px;top:600.00px;font-size:15.6px;color:#1c1c1c;transform:scaleX(0.8900);">SubDevice_1015</span>
<span class="t" style="left:239.31px;top:600.00px;font-size:15.6px;color:#1c1c1c;transform:scaleX(0.8888);">[EL1809]</span>
<span class="t" style="left:300.30px;top:600.00px;font-size:15.6px;color:#1c1c1c;transform:scaleX(0.8823);">(1015)</span>
<span class="t" style="left:127.70px;top:630.00px;font-size:15.6px;color:#1c1c1c;transform:scaleX(0.8975);">SubDevice_1016</span>
<span class="t" style="left:239.31px;top:630.00px;font-size:15.6px;color:#1c1c1c;transform:scaleX(0.8888);">[EL2809]</span>
<span class="t" style="left:300.30px;top:630.00px;font-size:15.6px;color:#1c1c1c;transform:scaleX(0.8823);">(1016)</span>
<span class="t" style="left:127.70px;top:660.00px;font-size:15.6px;color:#1c1c1c;transform:scaleX(0.8975);">SubDevice_1017</span>
<span class="t" style="left:239.31px;top:660.00px;font-size:15.6px;color:#1c1c1c;transform:scaleX(0.8888);">[EL1809]</span>
<span class="t" style="left:300.30px;top:660.00px;font-size:15.6px;color:#1c1c1c;transform:scaleX(0.8823);">(1017)</span>
<span class="t" style="left:101.30px;top:690.00px;font-size:15.6px;color:#1c1c1c;transform:scaleX(0.8975);">SubDevice_1018</span>
<span class="t" style="left:213.11px;top:690.00px;font-size:15.6px;color:#1c1c1c;transform:scaleX(0.8935);">[EK1101]</span>
<span class="t" style="left:275.80px;top:690.00px;font-size:15.6px;color:#1c1c1c;transform:scaleX(0.8823);">(1018)</span>
<span class="t" style="left:127.70px;top:720.00px;font-size:15.6px;color:#1c1c1c;transform:scaleX(0.8975);">SubDevice_1019</span>
<span class="t" style="left:239.31px;top:720.00px;font-size:15.6px;color:#1c1c1c;transform:scaleX(0.8888);">[EL2004]</span>
<span class="t" style="left:300.30px;top:720.00px;font-size:15.6px;color:#1c1c1c;transform:scaleX(0.8823);">(1019)</span>
<span class="t" style="left:147.60px;top:750.00px;font-size:15.6px;color:#1c1c1c;transform:scaleX(0.8900);">SubDevice_1020</span>
<span class="t" style="left:259.41px;top:750.00px;font-size:15.6px;color:#1c1c1c;transform:scaleX(0.8935);">[EK1122]</span>
<span class="t" style="left:322.10px;top:750.00px;font-size:15.6px;color:#1c1c1c;transform:scaleX(0.8823);">(1020)</span>
<span class="t" style="left:127.70px;top:780.00px;font-size:15.6px;color:#1c1c1c;transform:scaleX(0.8900);">SubDevice_1024</span>
<span class="t" style="left:239.51px;top:780.00px;font-size:15.6px;color:#1c1c1c;transform:scaleX(0.8935);">[EK1122]</span>
<span class="t" style="left:302.20px;top:780.00px;font-size:15.6px;color:#1c1c1c;transform:scaleX(0.8823);">(1024)</span>
<span class="t" style="left:127.70px;top:810.00px;font-size:15.6px;color:#1c1c1c;transform:scaleX(0.8900);">SubDevice_1025</span>
<span class="t" style="left:239.51px;top:810.00px;font-size:15.6px;color:#1c1c1c;transform:scaleX(0.8935);">[EK1122]</span>
<span class="t" style="left:302.20px;top:810.00px;font-size:15.6px;color:#1c1c1c;transform:scaleX(0.8823);">(1025)</span>
<span class="t" style="left:101.30px;top:840.00px;font-size:15.6px;color:#1c1c1c;transform:scaleX(0.8975);">SubDevice_1027</span>
<span class="t" style="left:213.11px;top:840.00px;font-size:15.6px;color:#1c1c1c;transform:scaleX(0.8935);">[EK1100]</span>
<span class="t" style="left:275.80px;top:840.00px;font-size:15.6px;color:#1c1c1c;transform:scaleX(0.8823);">(1027)</span>
<span class="t" style="left:127.70px;top:870.00px;font-size:15.6px;color:#1c1c1c;transform:scaleX(0.8975);">SubDevice_1028</span>
<span class="t" style="left:239.31px;top:870.00px;font-size:15.6px;color:#1c1c1c;transform:scaleX(0.8888);">[EL2004]</span>
<span class="t" style="left:300.30px;top:870.00px;font-size:15.6px;color:#1c1c1c;transform:scaleX(0.8823);">(1028)</span>
<span class="t" style="left:127.70px;top:900.00px;font-size:15.6px;color:#1c1c1c;transform:scaleX(0.8975);">SubDevice_1029</span>
<span class="t" style="left:239.31px;top:900.00px;font-size:15.6px;color:#1c1c1c;transform:scaleX(0.8888);">[EL2004]</span>
<span class="t" style="left:300.30px;top:900.00px;font-size:15.6px;color:#1c1c1c;transform:scaleX(0.8823);">(1029)</span>
<span class="t" style="left:127.70px;top:930.00px;font-size:15.6px;color:#1c1c1c;transform:scaleX(0.8900);">SubDevice_1030</span>
<span class="t" style="left:239.31px;top:930.00px;font-size:15.6px;color:#1c1c1c;transform:scaleX(0.8888);">[EL1014]</span>
<span class="t" style="left:300.30px;top:930.00px;font-size:15.6px;color:#1c1c1c;transform:scaleX(0.8823);">(1030)</span>
<span class="t" style="left:127.70px;top:960.00px;font-size:15.6px;color:#1c1c1c;transform:scaleX(0.8975);">SubDevice_1031</span>
<span class="t" style="left:239.31px;top:960.00px;font-size:15.6px;color:#1c1c1c;transform:scaleX(0.8888);">[EL6601]</span>
<span class="t" style="left:300.30px;top:960.00px;font-size:15.6px;color:#1c1c1c;transform:scaleX(0.8823);">(1031)</span>
<span class="t" style="left:101.30px;top:990.00px;font-size:15.6px;color:#1c1c1c;transform:scaleX(0.8975);">SubDevice_1032</span>
<span class="t" style="left:213.11px;top:990.00px;font-size:15.6px;color:#1c1c1c;transform:scaleX(0.8935);">[EK1100]</span>
<span class="t" style="left:275.80px;top:990.00px;font-size:15.6px;color:#1c1c1c;transform:scaleX(0.8823);">(1032)</span>
<span class="t" style="left:33.60px;top:1063.00px;font-size:15.6px;color:#6e6e6e;transform:scaleX(0.8915);">Classic View</span>
<span class="t" style="left:142.57px;top:1063.00px;font-size:15.6px;color:#6e6e6e;transform:scaleX(0.9279);">Flat View</span>
<span class="t" style="left:232.90px;top:1063.00px;font-size:15.6px;color:#6e6e6e;transform:scaleX(0.9573);">Topology View</span>
<span class="t" style="left:665.50px;top:159.00px;font-size:15.6px;color:#6e6e6e;transform:scaleX(0.9180);">General</span>
<span class="t" style="left:746.50px;top:159.00px;font-size:15.6px;color:#6e6e6e;transform:scaleX(0.9164);">Variables</span>
<span class="t" style="left:834.52px;top:159.00px;font-size:15.6px;color:#6e6e6e;transform:scaleX(0.8813);">ESC Register</span>
<span class="t" style="left:947.04px;top:159.00px;font-size:15.6px;color:#6e6e6e;transform:scaleX(0.8598);">EEPROM</span>
<span class="t" style="left:1033.96px;top:159.00px;font-size:15.6px;color:#555;transform:scaleX(0.9383);">Extended Diagnosis</span>
<span class="t" style="left:1193.97px;top:159.00px;font-size:15.6px;color:#6e6e6e;transform:scaleX(0.9288);">DC Diagnosis</span>
<span class="t" style="left:654.30px;top:206.00px;font-size:15.6px;color:#4a4a4a;font-weight:700;transform:scaleX(0.9404);">Common Error Counter</span>
<span class="t" style="left:1144.80px;top:216.00px;font-size:15.6px;color:#d0d0d0;transform:scaleX(0.9212);">Clear Error Counters</span>
<span class="t" style="left:666.07px;top:235.00px;font-size:15.6px;color:#5a5a5a;transform:scaleX(0.9264);">Processing Unit Error (0x030C)</span>
<span class="t" style="left:896.90px;top:234.00px;font-size:15.6px;color:#969696;transform:scaleX(0.9237);">42</span>
<span class="t" style="left:666.08px;top:267.00px;font-size:15.6px;color:#5a5a5a;transform:scaleX(0.9179);">PDI Error (0x030D)</span>
<span class="t" style="left:896.90px;top:266.00px;font-size:15.6px;color:#969696;transform:scaleX(0.8222);">0</span>
<span class="t" style="left:653.33px;top:305.00px;font-size:15.6px;color:#4a4a4a;font-weight:700;transform:scaleX(0.9693);">Port 0 counters (In port)</span>
<span class="t" style="left:666.28px;top:334.00px;font-size:15.6px;color:#5a5a5a;transform:scaleX(0.9177);">Invalid Frame, CRC error (0x0300)</span>
<span class="t" style="left:916.32px;top:332.00px;font-size:15.6px;color:#969696;transform:scaleX(0.9826);">16</span>
<span class="t" style="left:666.29px;top:366.00px;font-size:15.6px;color:#5a5a5a;transform:scaleX(0.9072);">RX Error (0x0301)</span>
<span class="t" style="left:916.32px;top:365.00px;font-size:15.6px;color:#969696;transform:scaleX(0.9826);">16</span>
<span class="t" style="left:666.27px;top:399.00px;font-size:15.6px;color:#5a5a5a;transform:scaleX(0.9261);">Lost Link (0x0310)</span>
<span class="t" style="left:917.30px;top:397.00px;font-size:15.6px;color:#969696;transform:scaleX(0.8222);">0</span>
<span class="t" style="left:666.28px;top:431.00px;font-size:15.6px;color:#5a5a5a;transform:scaleX(0.9221);">Forwarded RX Error (0x0308)</span>
<span class="t" style="left:917.30px;top:430.00px;font-size:15.6px;color:#969696;transform:scaleX(0.9237);">26</span>
<span class="t" style="left:978.25px;top:305.00px;font-size:15.6px;color:#4a4a4a;font-weight:700;transform:scaleX(0.9507);">Port 1 counters</span>
<span class="t" style="left:991.18px;top:334.00px;font-size:15.6px;color:#5a5a5a;transform:scaleX(0.9177);">Invalid Frame, CRC error (0x0302)</span>
<span class="t" style="left:1242.20px;top:332.00px;font-size:15.6px;color:#969696;transform:scaleX(0.8222);">0</span>
<span class="t" style="left:991.19px;top:366.00px;font-size:15.6px;color:#5a5a5a;transform:scaleX(0.9072);">RX Error (0x0303)</span>
<span class="t" style="left:1242.20px;top:365.00px;font-size:15.6px;color:#969696;transform:scaleX(0.8222);">0</span>
<span class="t" style="left:991.17px;top:399.00px;font-size:15.6px;color:#5a5a5a;transform:scaleX(0.9346);">Lost Link (0x0311)</span>
<span class="t" style="left:1242.20px;top:397.00px;font-size:15.6px;color:#969696;transform:scaleX(0.8222);">0</span>
<span class="t" style="left:991.18px;top:431.00px;font-size:15.6px;color:#5a5a5a;transform:scaleX(0.9221);">Forwarded RX Error (0x0309)</span>
<span class="t" style="left:1242.20px;top:430.00px;font-size:15.6px;color:#969696;transform:scaleX(0.8222);">0</span>
<span class="t" style="left:653.35px;top:470.00px;font-size:15.6px;color:#4a4a4a;font-weight:700;transform:scaleX(0.9507);">Port 2 counters</span>
<span class="t" style="left:666.28px;top:499.00px;font-size:15.6px;color:#5a5a5a;transform:scaleX(0.9177);">Invalid Frame, CRC error (0x0304)</span>
<span class="t" style="left:917.30px;top:497.00px;font-size:15.6px;color:#969696;transform:scaleX(0.8222);">0</span>
<span class="t" style="left:666.29px;top:531.00px;font-size:15.6px;color:#5a5a5a;transform:scaleX(0.9072);">RX Error (0x0305)</span>
<span class="t" style="left:917.30px;top:530.00px;font-size:15.6px;color:#969696;transform:scaleX(0.8222);">0</span>
<span class="t" style="left:666.27px;top:564.00px;font-size:15.6px;color:#5a5a5a;transform:scaleX(0.9261);">Lost Link (0x0312)</span>
<span class="t" style="left:917.30px;top:562.00px;font-size:15.6px;color:#969696;transform:scaleX(0.8222);">0</span>
<span class="t" style="left:666.29px;top:596.00px;font-size:15.6px;color:#5a5a5a;transform:scaleX(0.9144);">Forwarded RX Error (0x030A)</span>
<span class="t" style="left:917.30px;top:595.00px;font-size:15.6px;color:#969696;transform:scaleX(0.9237);">63</span>
<span class="t" style="left:978.25px;top:470.00px;font-size:15.6px;color:#4a4a4a;font-weight:700;transform:scaleX(0.9507);">Port 3 counters</span>
<span class="t" style="left:991.18px;top:499.00px;font-size:15.6px;color:#5a5a5a;transform:scaleX(0.9177);">Invalid Frame, CRC error (0x0306)</span>
<span class="t" style="left:1242.20px;top:497.00px;font-size:15.6px;color:#969696;transform:scaleX(0.8222);">0</span>
<span class="t" style="left:991.19px;top:531.00px;font-size:15.6px;color:#5a5a5a;transform:scaleX(0.9072);">RX Error (0x0307)</span>
<span class="t" style="left:1242.20px;top:530.00px;font-size:15.6px;color:#969696;transform:scaleX(0.8222);">0</span>
<span class="t" style="left:991.17px;top:564.00px;font-size:15.6px;color:#5a5a5a;transform:scaleX(0.9261);">Lost Link (0x0313)</span>
<span class="t" style="left:1242.20px;top:562.00px;font-size:15.6px;color:#969696;transform:scaleX(0.8222);">0</span>
<span class="t" style="left:991.19px;top:596.00px;font-size:15.6px;color:#5a5a5a;transform:scaleX(0.9144);">Forwarded RX Error (0x030B)</span>
<span class="t" style="left:1242.20px;top:595.00px;font-size:15.6px;color:#969696;transform:scaleX(0.9237);">52</span>
<span class="t" style="left:9.80px;top:1109.00px;font-size:15.6px;color:#929292;transform:scaleX(0.9567);">Short Info</span>
<span class="t" style="left:14.20px;top:1150.00px;font-size:15.6px;color:#4a4a4a;font-weight:700;">Information</span>
<span class="t" style="left:26.83px;top:1176.00px;font-size:15.6px;color:#5a5a5a;transform:scaleX(0.9744);">Name</span>
<span class="t" style="left:163.90px;top:1180.00px;font-size:15.6px;color:#909090;transform:scaleX(0.9081);">SubDevice_1020 [EK1122]</span>
<span class="t" style="left:26.83px;top:1206.00px;font-size:15.6px;color:#5a5a5a;transform:scaleX(0.9721);">Description</span>
<span class="t" style="left:162.96px;top:1210.00px;font-size:15.6px;color:#909090;transform:scaleX(0.9440);">EK1122 2 port EtherCAT junction</span>
<span class="t" style="left:27.80px;top:1236.00px;font-size:15.6px;color:#5a5a5a;transform:scaleX(0.9527);">Vendor</span>
<span class="t" style="left:162.94px;top:1240.00px;font-size:15.6px;color:#909090;transform:scaleX(0.9576);">Beckhoff Automation GmbH &amp; Co. KG</span>
<span class="t" style="left:419.10px;top:1240.00px;font-size:15.6px;color:#909090;transform:scaleX(0.9050);">(0x00000</span>
<span class="t" style="left:26.89px;top:1266.00px;font-size:15.6px;color:#5a5a5a;transform:scaleX(0.9149);">Physical Address</span>
<span class="t" style="left:162.95px;top:1270.00px;font-size:15.6px;color:#909090;transform:scaleX(0.9495);">1020</span>
<span class="t" style="left:27.80px;top:1296.00px;font-size:15.6px;color:#5a5a5a;transform:scaleX(0.9414);">AutoInc Address</span>
<span class="t" style="left:163.90px;top:1300.00px;font-size:15.6px;color:#909090;transform:scaleX(0.9093);">0xFFED / -19</span>
<span class="t" style="left:508.09px;top:1109.00px;font-size:15.6px;color:#929292;transform:scaleX(0.9107);">Messages</span>
<span class="t" style="left:542.40px;top:1144.00px;font-size:13.8px;color:#2e2e2e;transform:scaleX(0.9491);">Severity</span>
<span class="t" style="left:607.40px;top:1144.00px;font-size:13.8px;color:#2e2e2e;transform:scaleX(0.9549);">Time</span>
<span class="t" style="left:676.44px;top:1144.00px;font-size:13.8px;color:#2e2e2e;transform:scaleX(0.9601);">Message</span>
<span class="t" style="left:557.01px;top:1177.00px;font-size:15.6px;color:#5a5a5a;transform:scaleX(0.7896);">ERR</span>
<span class="t" style="left:610.51px;top:1177.00px;font-size:15.6px;color:#5a5a5a;transform:scaleX(0.8879);">10:34:04</span>
<span class="t" style="left:680.40px;top:1177.00px;font-size:15.6px;color:#5a5a5a;transform:scaleX(0.9280);">SubDevice &#x27;1026&#x27;: RX Error detected (Port: A, Total: 12).</span>
<span class="t" style="left:557.01px;top:1207.00px;font-size:15.6px;color:#5a5a5a;transform:scaleX(0.7896);">ERR</span>
<span class="t" style="left:610.51px;top:1207.00px;font-size:15.6px;color:#5a5a5a;transform:scaleX(0.8879);">10:34:04</span>
<span class="t" style="left:680.40px;top:1207.00px;font-size:15.6px;color:#5a5a5a;transform:scaleX(0.9293);">SubDevice &#x27;1026&#x27;: Invalid Frame, CRC error detected (Port: A, Total: 12).</span>
<span class="t" style="left:557.01px;top:1237.00px;font-size:15.6px;color:#5a5a5a;transform:scaleX(0.7896);">ERR</span>
<span class="t" style="left:610.51px;top:1237.00px;font-size:15.6px;color:#5a5a5a;transform:scaleX(0.8879);">10:34:04</span>
<span class="t" style="left:680.40px;top:1237.00px;font-size:15.6px;color:#5a5a5a;transform:scaleX(0.9280);">SubDevice &#x27;1022&#x27;: RX Error detected (Port: A, Total: 10).</span>
<span class="t" style="left:557.01px;top:1267.00px;font-size:15.6px;color:#5a5a5a;transform:scaleX(0.7896);">ERR</span>
<span class="t" style="left:610.51px;top:1267.00px;font-size:15.6px;color:#5a5a5a;transform:scaleX(0.8879);">10:34:04</span>
<span class="t" style="left:680.40px;top:1267.00px;font-size:15.6px;color:#5a5a5a;transform:scaleX(0.9293);">SubDevice &#x27;1022&#x27;: Invalid Frame, CRC error detected (Port: A, Total: 10).</span>
<span class="t" style="left:557.01px;top:1297.00px;font-size:15.6px;color:#5a5a5a;transform:scaleX(0.7896);">ERR</span>
<span class="t" style="left:610.51px;top:1297.00px;font-size:15.6px;color:#5a5a5a;transform:scaleX(0.8879);">10:34:04</span>
<span class="t" style="left:680.40px;top:1297.00px;font-size:15.6px;color:#5a5a5a;transform:scaleX(0.9280);">SubDevice &#x27;1020&#x27;: RX Error detected (Port: A, Total: 16).</span>
<span class="t" style="left:557.01px;top:1327.00px;font-size:15.6px;color:#5a5a5a;transform:scaleX(0.7896);">ERR</span>
<span class="t" style="left:610.51px;top:1327.00px;font-size:15.6px;color:#5a5a5a;transform:scaleX(0.8879);">10:34:04</span>
<span class="t" style="left:680.40px;top:1327.00px;font-size:15.6px;color:#5a5a5a;transform:scaleX(0.9293);">SubDevice &#x27;1020&#x27;: Invalid Frame, CRC error detected (Port: A, Total: 16).</span>
<span class="t" style="left:11.75px;top:1353.00px;font-size:15.6px;color:#626262;transform:scaleX(0.9522);">Networks: 1</span>
<span class="t" style="left:111.70px;top:1353.00px;font-size:15.6px;color:#626262;transform:scaleX(0.9056);">SubDevices: 33</span>
<span class="t" style="left:1512.70px;top:1353.00px;font-size:15.6px;color:#626262;transform:scaleX(0.9058);">State:</span>
<span class="t" style="left:1638.69px;top:1353.00px;font-size:15.6px;color:#626262;transform:scaleX(0.9148);">Mode: DIAGNOSIS</span>
<span class="t" style="left:1782.93px;top:1353.00px;font-size:15.6px;color:#626262;transform:scaleX(0.7681);">EXPERT</span>
<div class="a" style="left:473px;top:1237px;width:7px;height:28px;background:#f8f8f8"></div>
</body></html>
